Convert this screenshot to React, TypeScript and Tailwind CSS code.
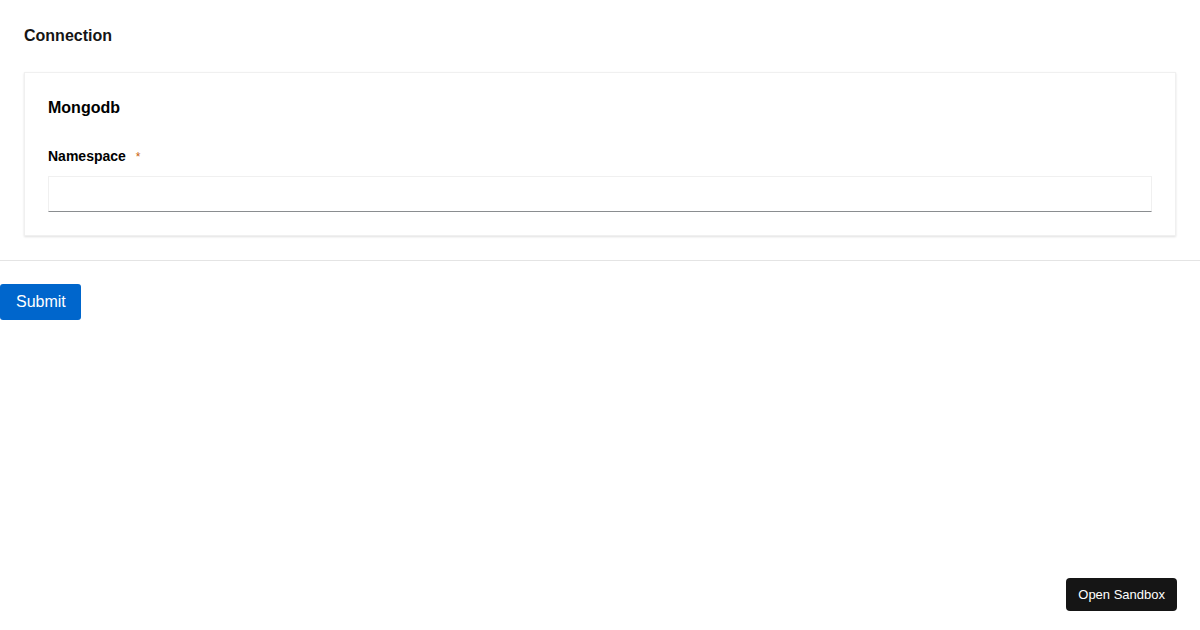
import React from "react";

export default function App() {
  return (
    <div className="relative w-[1200px] h-[630px] bg-white text-[#151515]" style={{ fontFamily: '"Liberation Sans", Arial, sans-serif' }}>
      <div className="p-6 border-b border-[#e4e4e4]">
        <h2 className="text-base font-bold leading-6">Connection</h2>
        <div className="mt-6 bg-white shadow-[inset_0_0_0_1px_#f0f0f0,0_1px_2px_rgba(0,0,0,0.12)] p-6">
          <h3 className="text-base font-bold leading-6 text-black">Mongodb</h3>
          <div className="mt-6">
            <label className="block text-sm font-bold leading-6 text-black">
              Namespace<span className="ml-[10px] font-normal text-xs text-[#c9600b]">*</span>
            </label>
            <input
              type="text"
              className="mt-2 block w-full h-9 border border-[#f0f0f0] border-b-[#8a8d90] bg-white outline-none px-2 text-sm"
            />
          </div>
        </div>
      </div>
      <div className="pt-[23px]">
        <button className="h-9 pl-4 pr-[15px] bg-[#0066cc] text-white text-base rounded-[3px]">Submit</button>
      </div>
      <button className="absolute right-[23px] bottom-[19px] h-[33px] px-3 bg-[#151515] text-white text-[13px] rounded-[4px]">
        Open Sandbox
      </button>
    </div>
  );
}
